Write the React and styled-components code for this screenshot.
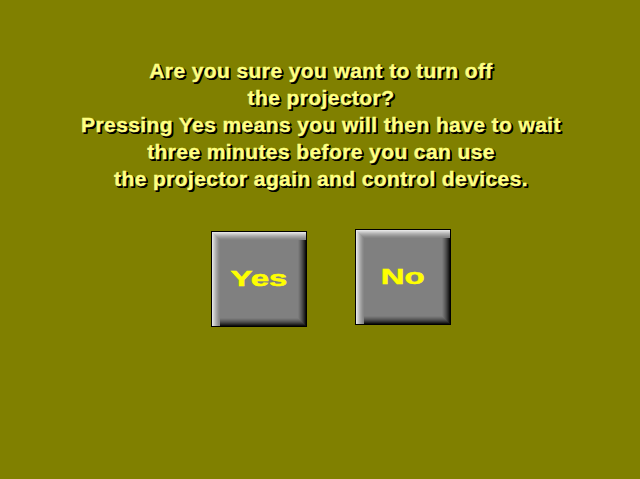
import React from 'react';
import styled, { createGlobalStyle } from 'styled-components';

const GlobalStyle = createGlobalStyle`
  html, body {
    margin: 0;
    padding: 0;
    background: #808000;
  }
`;

const Screen = styled.div`
  box-sizing: border-box;
  width: 640px;
  height: 479px;
  background: #808000;
  padding-top: 57px;
  display: flex;
  flex-direction: column;
  align-items: center;
  font-family: "Liberation Sans", Arial, sans-serif;
`;

const Message = styled.div`
  text-align: center;
  color: #ffff80;
  font-size: 21px;
  font-weight: bold;
  line-height: 27px;
  letter-spacing: 0.4px;
  -webkit-text-stroke: 0.4px #ffff80;
  text-shadow: 2px 2px 0 #000, 1px 2px 0 #000, 2px 1px 0 #000;
  margin-left: 2px;
`;

const ButtonRow = styled.div`
  display: flex;
  align-items: flex-start;
  gap: 48px;
  margin-top: 37px;
  margin-left: 22px;
`;

const BevelButton = styled.button`
  box-sizing: border-box;
  width: 96px;
  height: 96px;
  margin-top: ${(props) => props.offset || 0}px;
  padding: 0;
  border: 1px solid #000;
  background: #808080;
  box-shadow:
    inset 1px 1px 0 #e4e4e4,
    inset 2px 2px 0 #d4d4d4,
    inset 3px 3px 0 #c4c4c4,
    inset 4px 4px 0 #b4b4b4,
    inset 5px 5px 0 #a6a6a6,
    inset 6px 6px 0 #9a9a9a,
    inset 7px 7px 0 #8e8e8e,
    inset 8px 8px 0 #868686,
    inset -1px -1px 0 #101010,
    inset -2px -2px 0 #242424,
    inset -3px -3px 0 #363636,
    inset -4px -4px 0 #474747,
    inset -5px -5px 0 #565656,
    inset -6px -6px 0 #636363,
    inset -7px -7px 0 #6f6f6f,
    inset -8px -8px 0 #7a7a7a;
  display: flex;
  align-items: center;
  justify-content: center;
  cursor: pointer;
`;

const Label = styled.span`
  display: inline-block;
  color: #ffff00;
  font-family: "Liberation Sans", Arial, sans-serif;
  font-weight: bold;
  font-size: 22px;
  -webkit-text-stroke: 0.5px #ffff00;
  transform: scaleX(1.5);
`;

export default function App() {
  return (
    <>
      <GlobalStyle />
      <Screen>
        <Message>
          Are you sure you want to turn off
          <br />
          the projector?
          <br />
          Pressing Yes means you will then have to wait
          <br />
          three minutes before you can use
          <br />
          the projector again and control devices.
        </Message>
        <ButtonRow>
          <BevelButton offset={2}>
            <Label>Yes</Label>
          </BevelButton>
          <BevelButton>
            <Label>No</Label>
          </BevelButton>
        </ButtonRow>
      </Screen>
    </>
  );
}
